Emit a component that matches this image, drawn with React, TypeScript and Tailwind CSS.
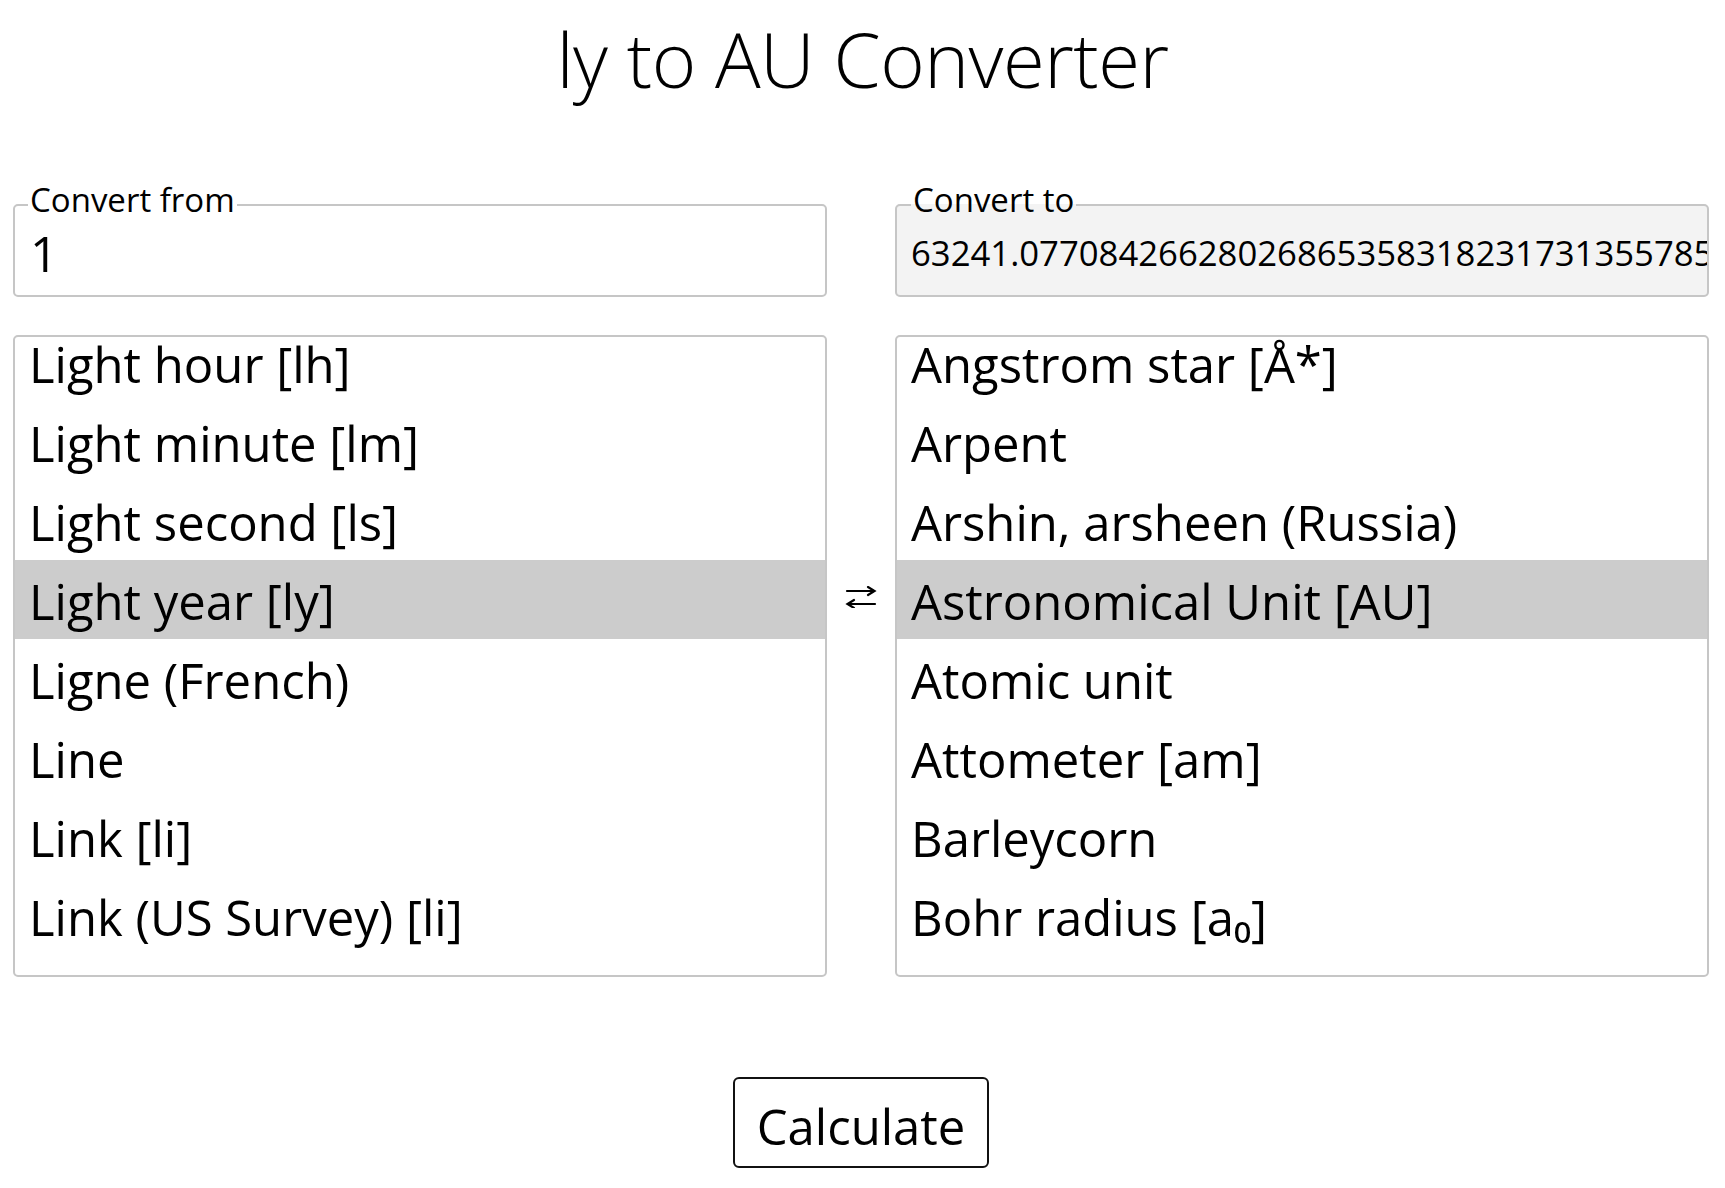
import React from "react";

const leftUnits = [
  "Light hour [lh]",
  "Light minute [lm]",
  "Light second [ls]",
  "Light year [ly]",
  "Ligne (French)",
  "Line",
  "Link [li]",
  "Link (US Survey) [li]",
];

const rightUnits = [
  "Angstrom star [Å*]",
  "Arpent",
  "Arshin, arsheen (Russia)",
  "Astronomical Unit [AU]",
  "Atomic unit",
  "Attometer [am]",
  "Barleycorn",
  "Bohr radius [a₀]",
];

function UnitList({ items, selected }: { items: string[]; selected: number }) {
  return (
    <div className="h-[642px] min-w-0 overflow-hidden rounded-[5px] border-2 border-[#c6c6c6] bg-white">
      <div className="-mt-[14px]">
        {items.map((it, i) => (
          <div
            key={it}
            className={
              "h-[79px] whitespace-nowrap pl-[14px] pt-[4px] text-[49px] leading-[75px] text-black " +
              (i === selected ? "bg-[#cccccc]" : "")
            }
          >
            {it}
          </div>
        ))}
      </div>
    </div>
  );
}

export default function App() {
  return (
    <div
      className="min-h-[1188px] w-[1725px] overflow-hidden bg-white text-black"
      style={{ fontFamily: '"Open Sans", "Noto Sans", "DejaVu Sans", sans-serif' }}
    >
      <h1 className="pt-[21px] text-center text-[76px] font-light leading-[76px] tracking-[-0.5px]">
        ly to AU Converter
      </h1>

      <div className="ml-[13px] mt-[87px] grid w-[1696px] grid-cols-[814px_68px_814px] gap-y-[38px]">
        <fieldset className="min-w-0 rounded-[5px] border-2 border-[#c6c6c6] px-[15px]">
          <legend className="-ml-[2px] px-[2px] pb-[10px] text-[33px] leading-[32px]">Convert from</legend>
          <div className="h-[69px] text-[49px] leading-[54px]">1</div>
        </fieldset>
        <div />
        <fieldset className="min-w-0 rounded-[5px] border-2 border-[#c6c6c6] bg-[#f3f3f3] pl-[14px]">
          <legend className="px-[2px] pb-[10px] text-[33px] leading-[32px]">Convert to</legend>
          <div className="h-[69px] w-full overflow-hidden whitespace-nowrap text-[34.7px] leading-[54px]">
            63241.077084266280268653583182317313557859
          </div>
        </fieldset>

        <UnitList items={leftUnits} selected={3} />
        <div className="flex items-start justify-center pt-[251px]">
          <svg width="32" height="22" viewBox="0 0 32 22" fill="none" stroke="#000" strokeWidth="2.2" strokeLinecap="round">
            <path d="M2 5H29M23 1L29.5 5L23 9" />
            <path d="M30 18H3M9 14L2.5 18L9 22" />
          </svg>
        </div>
        <UnitList items={rightUnits} selected={3} />
      </div>

      <div className="ml-[13px] mt-[100px] flex w-[1696px] justify-center">
        <button className="h-[91px] rounded-[6px] border-2 border-[#111] bg-white px-[22px] pt-[8px] text-[49px] leading-[79px] text-black">
          Calculate
        </button>
      </div>
    </div>
  );
}
